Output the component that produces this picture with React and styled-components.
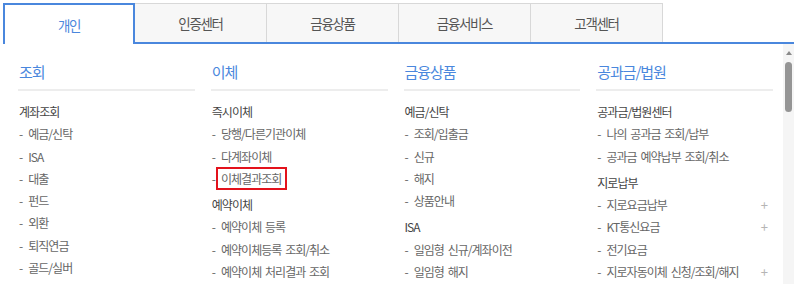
import React from 'react';
import styled, { createGlobalStyle, css } from 'styled-components';

const GlobalStyle = createGlobalStyle`
  html, body {
    margin: 0;
    background: #fff;
  }
  body {
    font-family: "Noto Sans CJK KR", "Noto Sans", sans-serif;
  }
`;

const Page = styled.div`
  width: 791px;
  padding: 3px 0 0 3px;
`;

const TabBar = styled.div`
  display: flex;
  border-bottom: 2px solid #4a87dd;
`;

const Tab = styled.div`
  width: 132px;
  height: 39px;
  box-sizing: border-box;
  display: flex;
  align-items: center;
  justify-content: center;
  font-size: 13.5px;
  letter-spacing: -0.1em;
  color: #555;
  background: #f7f7f7;
  border: 1px solid #d8d8d8;
  border-bottom: none;
  border-left: none;

  ${props => props.active && css`
    height: 41px;
    margin-bottom: -2px;
    background: #fff;
    color: #4a87dd;
    border: 2px solid #4a87dd;
    border-bottom: none;
  `}
`;

const Panel = styled.div`
  display: flex;
  height: 240px;
  overflow: hidden;
`;

const Columns = styled.div`
  flex: 1;
  display: grid;
  grid-template-columns: repeat(4, 1fr);
  column-gap: 16px;
  padding: 0 10px 0 15px;
  align-items: start;
`;

const Column = styled.div`
  display: flex;
  flex-direction: column;
`;

const Heading = styled.div`
  margin-top: 18px;
  padding-bottom: 7px;
  line-height: 20px;
  font-size: 15px;
  letter-spacing: -0.07em;
  color: #4a87dd;
  border-bottom: 2px solid #ededed;
  padding-left: 1px;
`;

const Group = styled.div`
  margin-top: ${props => (props.first ? '10px' : '4px')};
`;

const GroupTitle = styled.div`
  line-height: 22.3px;
  font-size: 12px;
  letter-spacing: -0.08em;
  color: #444;
  padding-left: 1px;
`;

const Item = styled.div`
  display: flex;
  justify-content: space-between;
  align-items: center;
  line-height: 22.3px;
  font-size: 12px;
  letter-spacing: -0.08em;
  color: #666;
  padding: 0 5px 0 1px;
`;

const Dash = styled.span`
  letter-spacing: 0;
  margin-right: 5px;
`;

const Label = styled.span`
  word-spacing: 2px;
`;

const Marked = styled.span`
  outline: 2px solid #e3121c;
  outline-offset: 1px;
  padding: 0 3px 0 2px;
  margin-left: -2px;
`;

const Plus = styled.span`
  font-size: 13px;
  color: #b5b5b5;
  letter-spacing: 0;
`;

const ScrollTrack = styled.div`
  width: 11px;
  flex-shrink: 0;
  background: #f5f5f5;
  display: flex;
  flex-direction: column;
  align-items: center;
`;

const ScrollArrow = styled.div`
  margin-top: 7px;
  width: 0;
  height: 0;
  border-left: 3.5px solid transparent;
  border-right: 3.5px solid transparent;
  border-bottom: 4px solid #8a8a8a;
`;

const ScrollThumb = styled.div`
  margin-top: 7px;
  width: 7px;
  height: 50px;
  border-radius: 4px;
  background: #959595;
`;

const tabs = ['개인', '인증센터', '금융상품', '금융서비스', '고객센터'];

const menu = [
  {
    title: '조회',
    groups: [
      { title: '계좌조회', items: ['예금/신탁', 'ISA', '대출', '펀드', '외환', '퇴직연금', '골드/실버'] },
    ],
  },
  {
    title: '이체',
    groups: [
      { title: '즉시이체', items: ['당행/다른기관이체', '다계좌이체', { label: '이체결과조회', marked: true }] },
      { title: '예약이체', items: ['예약이체 등록', '예약이체등록 조회/취소', '예약이체 처리결과 조회'] },
    ],
  },
  {
    title: '금융상품',
    groups: [
      { title: '예금/신탁', items: ['조회/입출금', '신규', '해지', '상품안내'] },
      { title: 'ISA', items: ['일임형 신규/계좌이전', '일임형 해지'] },
    ],
  },
  {
    title: '공과금/법원',
    groups: [
      { title: '공과금/법원센터', items: ['나의 공과금 조회/납부', '공과금 예약납부 조회/취소'] },
      {
        title: '지로납부',
        items: [
          { label: '지로요금납부', more: true },
          { label: 'KT통신요금', more: true },
          '전기요금',
          { label: '지로자동이체 신청/조회/해지', more: true },
        ],
      },
    ],
  },
];

function MenuItem({ item }) {
  const data = typeof item === 'string' ? { label: item } : item;
  return (
    <Item>
      <span>
        <Dash>-</Dash>
        {data.marked ? <Marked>{data.label}</Marked> : <Label>{data.label}</Label>}
      </span>
      {data.more && <Plus>+</Plus>}
    </Item>
  );
}

export default function App() {
  return (
    <Page>
      <GlobalStyle />
      <TabBar>
        {tabs.map((t, i) => (
          <Tab key={t} active={i === 0}>{t}</Tab>
        ))}
      </TabBar>
      <Panel>
        <Columns>
          {menu.map(col => (
            <Column key={col.title}>
              <Heading>{col.title}</Heading>
              {col.groups.map((g, gi) => (
                <Group key={g.title} first={gi === 0}>
                  <GroupTitle>{g.title}</GroupTitle>
                  {g.items.map((it, ii) => (
                    <MenuItem key={ii} item={it} />
                  ))}
                </Group>
              ))}
            </Column>
          ))}
        </Columns>
        <ScrollTrack>
          <ScrollArrow />
          <ScrollThumb />
        </ScrollTrack>
      </Panel>
    </Page>
  );
}
